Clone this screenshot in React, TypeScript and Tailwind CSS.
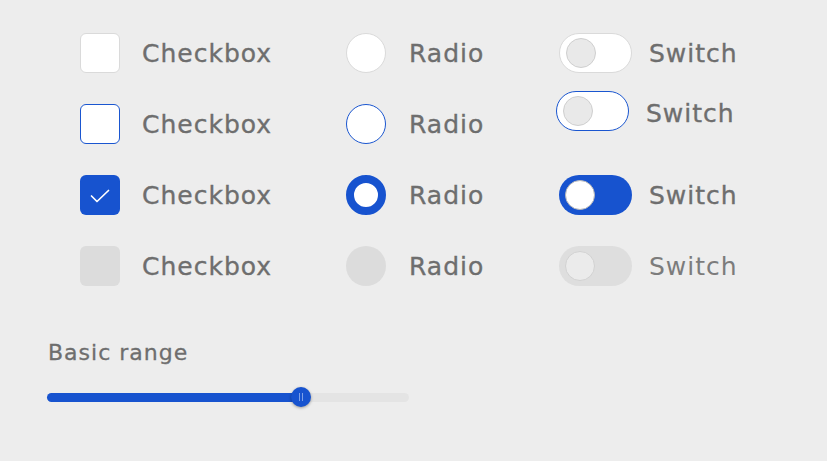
type State = 'default' | 'focus' | 'checked' | 'disabled'

const states: State[] = ['default', 'focus', 'checked', 'disabled']

function Checkbox({ state }: { state: State }) {
  const box = {
    default: 'bg-white border border-[#dadada]',
    focus: 'bg-white border-[1.5px] border-[#1a56d0]',
    checked: 'bg-[#1753cf]',
    disabled: 'bg-[#dcdcdc]',
  }[state]
  return (
    <div className={`w-10 h-10 rounded-[6px] flex items-center justify-center ${box}`}>
      {state === 'checked' && (
        <svg width="20" height="14" viewBox="0 0 20 14" fill="none" className="mt-[1px]">
          <path d="M1.5 7l5.5 5.5L18.5 1.5" stroke="white" strokeWidth="1.7" strokeLinecap="round" strokeLinejoin="round" />
        </svg>
      )}
    </div>
  )
}

function Radio({ state }: { state: State }) {
  const dot = {
    default: 'bg-white border border-[#dadada]',
    focus: 'bg-white border-[1.5px] border-[#1a56d0]',
    checked: 'bg-white border-[8px] border-[#1753cf]',
    disabled: 'bg-[#dcdcdc]',
  }[state]
  return <div className={`w-10 h-10 rounded-full ${dot}`} />
}

function Switch({ state }: { state: State }) {
  const track = {
    default: 'bg-white border border-[#dadada]',
    focus: 'bg-white border-[1.5px] border-[#1a56d0] -translate-x-[3px] -translate-y-[13px]',
    checked: 'bg-[#1753cf]',
    disabled: 'bg-[#dedede]',
  }[state]
  const thumb = {
    default: 'bg-[#e9e9e9] border border-[#cfcfcf]',
    focus: 'bg-[#e9e9e9] border border-[#cfcfcf]',
    checked: 'bg-white border border-[#b8b8b8]',
    disabled: 'bg-[#ebebeb] border border-[#d2d2d2]',
  }[state]
  return (
    <div className={`w-[73px] h-10 rounded-full flex items-center pl-[6px] ${track}`}>
      <div className={`w-[30px] h-[30px] rounded-full ${thumb}`} />
    </div>
  )
}

const label = 'text-[25px] leading-none tracking-[1px] [-webkit-text-stroke:0.35px_#6e6e6e]'

export default function App() {
  return (
    <div
      className="w-[827px] h-[461px] bg-[#ededed] text-[#6e6e6e] overflow-hidden"
      style={{ fontFamily: '"DejaVu Sans", "Noto Sans", sans-serif' }}
    >
      <div className="grid grid-cols-[266px_213px_auto] gap-y-[31px] pl-[80px] pt-[33px]">
        {states.map((s) => (
          <div key={s} className="contents">
            <div className="flex items-center gap-[22px] h-10">
              <Checkbox state={s} />
              <span className={`${label} pt-[1px]`}>Checkbox</span>
            </div>
            <div className="flex items-center gap-[23px] h-10">
              <Radio state={s} />
              <span className={`${label} pt-[1px]`}>Radio</span>
            </div>
            <div className="flex items-center gap-[17px] h-10">
              <Switch state={s} />
              {s === 'disabled' ? (
                <span className="text-[25px] leading-none tracking-[1px] text-[#7c7c7c]">Switch</span>
              ) : (
                <span className={`${label} ${s === 'focus' ? '-translate-x-[3px] -translate-y-[11px]' : ''}`}>
                  Switch
                </span>
              )}
            </div>
          </div>
        ))}
      </div>

      <div className="pl-[47px] pt-[56px] w-[409px]">
        <div className="text-[22px] leading-none pl-[1px] tracking-[1px] [-webkit-text-stroke:0.3px_#6e6e6e]">
          Basic range
        </div>
        <div className="mt-[23px] h-5 flex items-center">
          <div className="relative w-full h-[9px] rounded-full bg-[#e4e4e4]">
            <div className="h-full w-[254px] rounded-full bg-[#1753cf]" />
            <div className="absolute left-[244px] -top-[5.5px] w-5 h-5 rounded-full bg-[#1753cf] shadow-[0_1px_3px_rgba(0,0,0,0.35)] flex items-center justify-center gap-[2px]">
              <span className="w-px h-2 bg-[#7ea0e6]" />
              <span className="w-px h-2 bg-[#7ea0e6]" />
            </div>
          </div>
        </div>
      </div>
    </div>
  )
}
